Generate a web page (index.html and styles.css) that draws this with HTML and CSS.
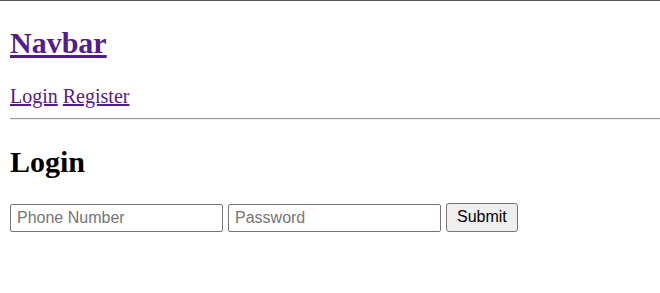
FILE: index.html
```html
<!DOCTYPE html>
<html>
<head>
<meta charset="utf-8">
<link rel="stylesheet" href="styles.css">
</head>
<body>
<div class="page">
  <nav class="nav">
    <h2 class="brand"><a href="#" class="link">Navbar</a></h2>
    <div class="links"><a href="#" class="link">Login</a> <a href="#" class="link">Register</a></div>
  </nav>
  <hr class="rule">
  <h2 class="title">Login</h2>
  <form class="form">
    <input class="field" type="text" placeholder="Phone Number">
    <input class="field" type="password" placeholder="Password">
    <button class="submit" type="button">Submit</button>
  </form>
</div>
</body>
</html>
```
FILE: styles.css
```css
html, body {
  margin: 0;
  padding: 0;
  background: #fff;
}
body {
  border-top: 1px solid #555;
  font-family: "Liberation Serif", "Times New Roman", serif;
  font-size: 20px;
  color: #000;
}
.page {
  padding: 0 0 0 10px;
}
.link {
  color: #551a8b;
}
.brand {
  font-size: 30px;
  margin: 24.9px 0;
}
.links {
  margin: 0;
}
.rule {
  margin: 10px 0;
  border: 0;
  border-top: 1px solid #9a9a9a;
  border-bottom: 1px solid #eeeeee;
  height: 0;
}
.title {
  font-size: 30px;
  margin: 24.9px 0;
}
.form {
  display: flex;
  align-items: flex-start;
  gap: 5px;
  margin: 0;
}
.field {
  width: 213px;
  height: 28px;
  box-sizing: border-box;
  margin: 0;
  font-family: "Liberation Sans", Arial, sans-serif;
  font-size: 16px;
  padding: 1px 6px;
  border: 1px solid #767676;
  border-radius: 2px;
  color: #000;
}
.field::placeholder {
  color: #757575;
}
.submit {
  height: 29px;
  margin: -1px 0 0 0;
  box-sizing: border-box;
  font-family: "Liberation Sans", Arial, sans-serif;
  font-size: 16px;
  padding: 1px 10px;
  background: #efefef;
  border: 1px solid #767676;
  border-radius: 3px;
  color: #000;
}
```
